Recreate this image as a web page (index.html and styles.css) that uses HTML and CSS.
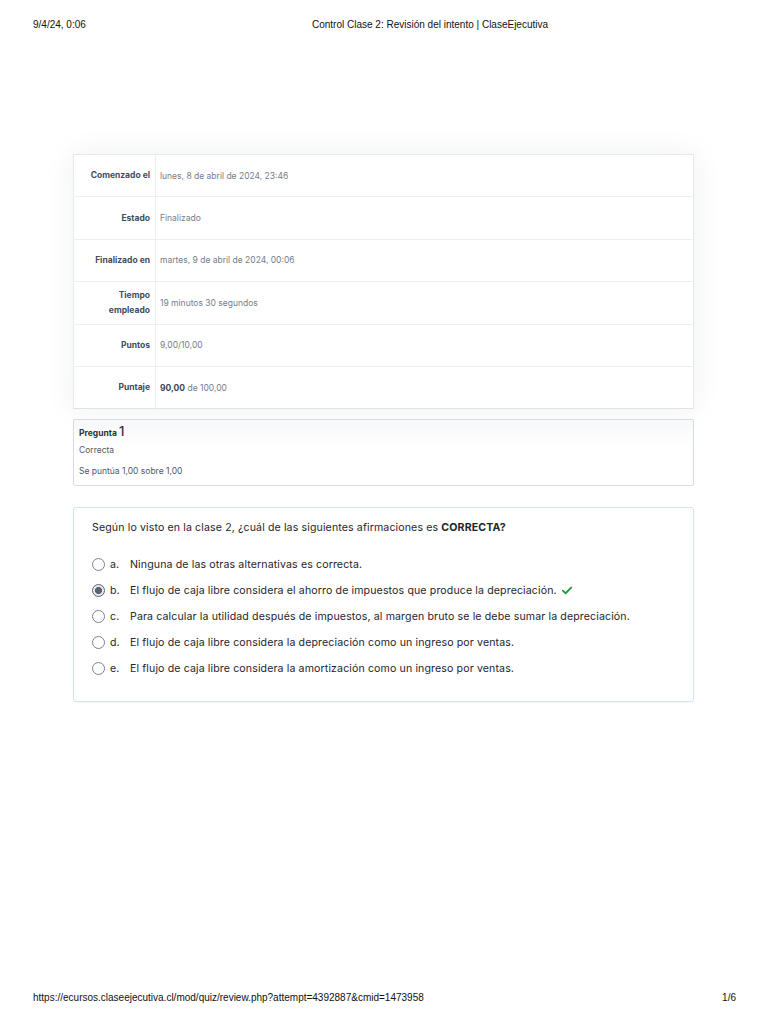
FILE: index.html
```html
<!DOCTYPE html>
<html lang="es">
<head>
    <meta charset="UTF-8">
    <meta name="viewport" content="width=device-width, initial-scale=1.0">
    <title>Control Clase 2: Revisión del intento | ClaseEjecutiva</title>
    <link rel="stylesheet" href="styles.css">
</head>
<body>
    <div class="sheet">
        <header class="print-bar">
            <span class="print-date">9/4/24, 0:06</span>
            <span class="print-title">Control Clase 2: Revisión del intento | ClaseEjecutiva</span>
        </header>

        <main class="review">
            <table class="summary">
                <tr>
                    <th>Comenzado el</th>
                    <td>lunes, 8 de abril de 2024, 23:46</td>
                </tr>
                <tr>
                    <th>Estado</th>
                    <td>Finalizado</td>
                </tr>
                <tr>
                    <th>Finalizado en</th>
                    <td>martes, 9 de abril de 2024, 00:06</td>
                </tr>
                <tr>
                    <th>Tiempo<br>empleado</th>
                    <td>19 minutos 30 segundos</td>
                </tr>
                <tr>
                    <th>Puntos</th>
                    <td>9,00/10,00</td>
                </tr>
                <tr>
                    <th>Puntaje</th>
                    <td><b>90,00</b> de 100,00</td>
                </tr>
            </table>

            <div class="qinfo">
                <h3 class="qno">Pregunta <span>1</span></h3>
                <div class="qstate">Correcta</div>
                <div class="qgrade">Se puntúa 1,00 sobre 1,00</div>
            </div>

            <div class="qtext-box">
                <p class="qtext">Según lo visto en la clase 2, ¿cuál de las siguientes afirmaciones es <b>CORRECTA?</b></p>
                <ul class="answers">
                    <li><span class="radio"></span><span class="letter">a.</span><span>Ninguna de las otras alternativas es correcta.</span></li>
                    <li><span class="radio checked"></span><span class="letter">b.</span><span>El flujo de caja libre considera el ahorro de impuestos que produce la depreciación.</span>
                        <svg class="tick" viewBox="0 0 12 10" width="10" height="9"><path d="M1 5.2 L4.3 8.3 L11 1.5" fill="none" stroke="#1f9d3a" stroke-width="2.2" stroke-linecap="round" stroke-linejoin="round"/></svg>
                    </li>
                    <li><span class="radio"></span><span class="letter">c.</span><span>Para calcular la utilidad después de impuestos, al margen bruto se le debe sumar la depreciación.</span></li>
                    <li><span class="radio"></span><span class="letter">d.</span><span>El flujo de caja libre considera la depreciación como un ingreso por ventas.</span></li>
                    <li><span class="radio"></span><span class="letter">e.</span><span>El flujo de caja libre considera la amortización como un ingreso por ventas.</span></li>
                </ul>
            </div>
        </main>

        <footer class="print-bar bottom">
            <span>https://ecursos.claseejecutiva.cl/mod/quiz/review.php?attempt=4392887&amp;cmid=1473958</span>
            <span>1/6</span>
        </footer>
    </div>
</body>
</html>
```

FILE: styles.css
```css
* {
    margin: 0;
    padding: 0;
    box-sizing: border-box;
}

body {
    background: #fff;
    font-family: Inter, "Noto Sans", sans-serif;
}

.sheet {
    min-height: 1024px;
    display: flex;
    flex-direction: column;
}

.print-bar {
    display: flex;
    font-family: "Liberation Sans", Arial, sans-serif;
    font-size: 10px;
    line-height: 12px;
    color: #111;
    padding: 19px 32px 0 33px;
}

.print-date {
    width: 279px;
}

.bottom {
    margin-top: auto;
    justify-content: space-between;
    padding: 0 32px 20px 33px;
}

.review {
    margin: 123px 74px 0 73px;
}

.summary {
    width: 100%;
    border-collapse: collapse;
    border: 1px solid #e6e9ee;
    box-shadow: 0 0 28px rgba(30, 40, 60, 0.07);
    font-size: 8.5px;
}

.summary tr {
    height: 42.4px;
    border-bottom: 1px solid #eceff2;
}

.summary tr:last-child {
    border-bottom: 1px solid #dfe3e8;
}

.summary th {
    width: 82px;
    text-align: right;
    padding: 0 5px 0 4px;
    font-weight: 700;
    color: #434c5a;
    line-height: 15px;
    border-right: 1px solid #eceff2;
}

.summary td {
    padding: 0 4px;
    color: #737e8c;
}

.summary td b {
    color: #3d4654;
}

.qinfo {
    margin-top: 10px;
    border: 1px solid #d5dce6;
    border-radius: 2px;
    padding: 4px 5px 8px;
    font-size: 8.5px;
    color: #505a66;
    background: linear-gradient(#f7f8fa, #fff 40%);
}

.qno {
    font-size: 8.5px;
    font-weight: 700;
    color: #2b333d;
    line-height: 14px;
}

.qno span {
    font-size: 13px;
    font-weight: 500;
}

.qstate {
    margin-top: 4px;
    line-height: 12px;
}

.qgrade {
    margin-top: 9px;
    line-height: 12px;
}

.qtext-box {
    margin-top: 21px;
    border: 1px solid #cfe4f6;
    border-radius: 3px;
    padding: 13px 18px 20px;
    font-size: 10.6px;
    letter-spacing: 0.12px;
    color: #1f252b;
    box-shadow: 0 1px 2px rgba(0, 0, 0, 0.03);
}

.qtext {
    line-height: 14px;
}

.qtext b {
    font-weight: 700;
}

.answers {
    list-style: none;
    margin-top: 16px;
}

.answers li {
    display: flex;
    align-items: center;
    height: 26px;
}

.radio {
    width: 13px;
    height: 13px;
    border: 1px solid #7a828c;
    border-radius: 50%;
    margin-right: 5px;
    flex: none;
}

.radio.checked {
    border-color: #5c6470;
    background: radial-gradient(circle, #5a6270 0 3.3px, #e6eaf0 3.8px);
}

.letter {
    width: 20px;
    flex: none;
}

.tick {
    margin-left: 5px;
}
```
